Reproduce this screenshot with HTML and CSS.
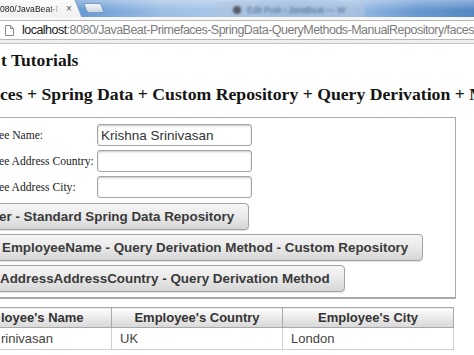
FILE: index.html
```html
<!DOCTYPE html>
<html lang="en">
<head>
  <meta charset="UTF-8">
  <meta name="viewport" content="width=device-width, initial-scale=1.0">
  <title>JavaBeat - Primefaces Spring Data</title>
  <link rel="stylesheet" href="styles.css">
</head>
<body>
  <!-- browser chrome -->
  <div class="tabstrip">
    <div class="tab-active">
      <span class="tab-title">080/JavaBeat-P</span>
      <span class="tab-close">&times;</span>
    </div>
    <div class="newtab"></div>
    <div class="tab-inactive">
      <span class="favicon"></span>
      <span class="tab-blur">Edit Post &lsaquo; JavaBeat &mdash; W</span>
    </div>
  </div>
  <div class="toolbar">
    <div class="omnibox">
      <svg class="page-icon" width="9" height="11" viewBox="0 0 9 11">
        <path d="M0.5 0.5 H5.5 L8.5 3.5 V10.5 H0.5 Z M5.5 0.5 V3.5 H8.5" fill="#fff" stroke="#8a8a8a" stroke-width="1"/>
      </svg>
      <span class="host">localhost</span><span class="path">:8080/JavaBeat-Primefaces-SpringData-QueryMethods-ManualRepository/faces</span>
    </div>
  </div>

  <!-- page -->
  <div class="page">
    <h1 class="site-title">t Tutorials</h1>
    <h2 class="page-title">ces + Spring Data + Custom Repository + Query Derivation + M</h2>

    <div class="panel">
      <div class="form-grid">
        <label for="name">ee Name:</label>
        <input type="text" id="name" value="Krishna Srinivasan">
        <label for="country">ee Address Country:</label>
        <input type="text" id="country">
        <label for="city">ee Address City:</label>
        <input type="text" id="city">
      </div>
      <div class="actions">
        <button type="button" class="btn btn-save">er - Standard Spring Data Repository</button>
        <button type="button" class="btn">EmployeeName - Query Derivation Method - Custom Repository</button>
        <button type="button" class="btn btn-country">AddressAddressCountry - Query Derivation Method</button>
      </div>
    </div>

    <table class="results">
      <thead>
        <tr>
          <th class="col-name">loyee's Name</th>
          <th class="col-country">Employee's Country</th>
          <th class="col-city">Employee's City</th>
        </tr>
      </thead>
      <tbody>
        <tr>
          <td class="first">rinivasan</td>
          <td>UK</td>
          <td>London</td>
        </tr>
      </tbody>
    </table>
  </div>
</body>
</html>
```

FILE: styles.css
```css
* {
  box-sizing: border-box;
}
body {
  margin: 0;
  width: 474px;
  height: 355px;
  overflow: hidden;
  background: #fff;
  font-family: "Liberation Sans", Arial, sans-serif;
}

/* tab strip */
.tabstrip {
  height: 17px;
  display: flex;
  align-items: flex-end;
  overflow: hidden;
  background:
    linear-gradient(180deg, rgba(255,255,255,0.35) 0%, rgba(255,255,255,0) 60%),
    linear-gradient(90deg, #5a8ecb 0%, #6a9cd5 18%, #9cbee4 34%, #a6c5e8 44%, #8bb2df 62%, #9abde4 74%, #6798d1 88%, #5587c4 100%);
}
.tab-active {
  position: relative;
  width: 74px;
  height: 17px;
  display: flex;
  align-items: center;
  background: linear-gradient(#fbfbfb, #f1f1f1);
  z-index: 1;
}
.tab-active::after {
  content: "";
  position: absolute;
  top: 0;
  right: -5px;
  width: 10px;
  height: 100%;
  background: linear-gradient(#fbfbfb, #f1f1f1);
  border-right: 1px solid #8aa6c8;
  transform: skewX(22deg);
  z-index: -1;
}
.tab-title {
  font-size: 8.6px;
  color: #222;
  white-space: nowrap;
  width: 60px;
  overflow: hidden;
  -webkit-mask-image: linear-gradient(90deg, #000 82%, transparent 100%);
  mask-image: linear-gradient(90deg, #000 82%, transparent 100%);
}
.tab-close {
  font-size: 10px;
  color: #555;
  margin-left: 6px;
  line-height: 1;
}
.newtab {
  width: 18px;
  height: 10px;
  margin: 0 0 4px 11px;
  border: 1px solid #7e9bbd;
  border-radius: 2px;
  background: linear-gradient(#f2f6fa, #c8d6e6);
  transform: skewX(22deg);
}
.tab-inactive {
  width: 150px;
  height: 15px;
  margin-left: 112px;
  display: flex;
  align-items: center;
  gap: 6px;
  padding-left: 18px;
  background: rgba(185, 200, 222, 0.45);
}
.favicon {
  width: 8px;
  height: 8px;
  border-radius: 50%;
  background: #5a5a66;
  filter: blur(0.8px);
  flex: none;
}
.tab-blur {
  font-size: 8.5px;
  color: #2f4a6a;
  white-space: nowrap;
  filter: blur(1px);
  opacity: 0.7;
}

/* toolbar */
.toolbar {
  height: 27px;
  padding-top: 3px;
  background: linear-gradient(#f7f7f7, #efefef);
  border-bottom: 1px solid #c6c6c6;
  overflow: hidden;
}
.omnibox {
  margin: 0 -4px 0 -2px;
  height: 20px;
  display: flex;
  align-items: center;
  background: #fff;
  border: 1px solid #b8b8b8;
  border-radius: 2px;
  white-space: nowrap;
  overflow: hidden;
  font-size: 12.5px;
  letter-spacing: -0.52px;
}
.page-icon {
  flex: none;
  margin: 0 8px 0 6px;
}
.host {
  color: #222;
}
.path {
  color: #7b7b7b;
}

/* page content */
.page {
  white-space: nowrap;
}
.site-title,
.page-title {
  font: bold 17.5px/20px "Liberation Serif", "Times New Roman", serif;
  color: #151515;
  margin: 0;
}
.site-title {
  margin-top: 6px;
  padding-left: 1px;
}
.page-title {
  margin-top: 14px;
  font-size: 17.7px;
  overflow: hidden;
}
.panel {
  margin: 13px 0 0 -6px;
  width: 462px;
  border: 1px solid #ababab;
  border-bottom: 2px solid #a8a8a8;
  padding: 6px 0 5px 5px;
}
.form-grid {
  display: grid;
  grid-template-columns: 97px 155px;
  row-gap: 4px;
  align-items: center;
}
.form-grid label {
  font: 11.6px "Liberation Serif", "Times New Roman", serif;
  color: #222;
  margin-left: -1px;
  padding-top: 1px;
}
.form-grid input {
  height: 22px;
  width: 155px;
  border: 1px solid #a5a5a5;
  border-radius: 3px;
  box-shadow: inset 0 1px 2px rgba(0, 0, 0, 0.22);
  padding: 0 3px;
  font: 13.5px "Liberation Sans", Arial, sans-serif;
  color: #333;
  background: #fff;
}
.actions {
  display: flex;
  flex-direction: column;
  align-items: flex-start;
  gap: 4px;
  margin-top: 5px;
}
.btn {
  height: 27px;
  margin-left: -13px;
  padding: 0 14px 0 14px;
  border: 1px solid #a3a3a3;
  border-radius: 4px;
  background: linear-gradient(#f6f6f6 0%, #e9e9e9 50%, #d6d6d6 100%);
  box-shadow: 0 1px 1px rgba(0, 0, 0, 0.12);
  font: bold 13.4px "Liberation Sans", Arial, sans-serif;
  color: #3a3a3a;
  white-space: nowrap;
}
.btn-save {
  margin-left: -16px;
}
.btn-country {
  margin-left: -15px;
}

/* data table */
.results {
  margin: 8px 0 0 -1px;
  width: 455px;
  border-collapse: collapse;
  table-layout: fixed;
  font-size: 13px;
  color: #333;
}
.results th {
  height: 20px;
  padding: 0;
  border: 1px solid #a9a9a9;
  background: linear-gradient(#fdfdfd, #e6e6e6 60%, #d8d8d8);
  font-weight: bold;
  text-align: center;
}
.results .col-name {
  width: 112px;
  text-align: left;
  padding-left: 1px;
}
.results .col-country,
.results .col-city {
  width: 171px;
}
.results td {
  height: 22px;
  padding: 0 8px;
  border: 1px solid #d0d0d0;
  color: #444;
}
.results td.first {
  padding-left: 1px;
}
```
